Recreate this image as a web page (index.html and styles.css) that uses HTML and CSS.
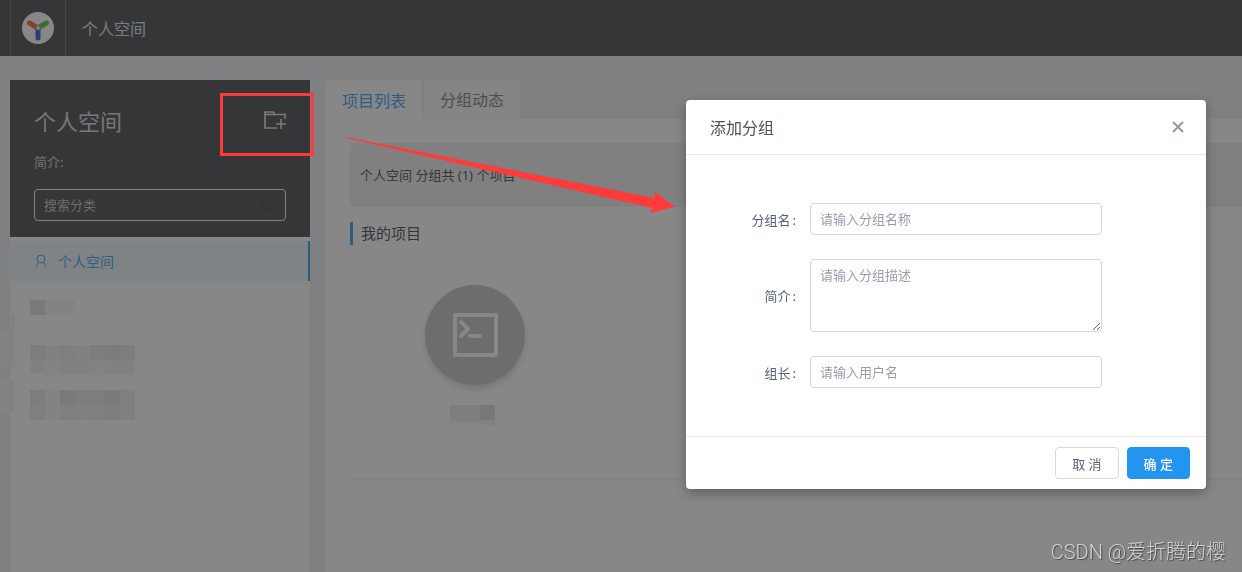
FILE: index.html
```html
<!DOCTYPE html>
<html lang="zh-CN">
<head>
  <meta charset="UTF-8">
  <meta name="viewport" content="width=device-width, initial-scale=1.0">
  <title>个人空间</title>
  <link rel="stylesheet" href="styles.css">
</head>
<body>

  <header class="header">
    <a class="logo" href="#" aria-label="YApi">
      <svg width="32" height="32" viewBox="0 0 32 32">
        <circle cx="16" cy="16" r="16" fill="#fff"/>
        <g stroke-width="5" stroke-linecap="round">
          <path d="M16 16L7.5 11" stroke="#f0561f"/>
          <path d="M16 16L24.5 11" stroke="#4cb81c"/>
          <path d="M16 17V26" stroke="#2346d8"/>
        </g>
        <circle cx="16" cy="16" r="2" fill="#fff" stroke="#c99" stroke-width="1"/>
      </svg>
    </a>
    <span class="breadcrumb">个人空间</span>
  </header>

  <div class="layout">
    <aside class="sidebar">
      <div class="group-bar">
        <div class="group-head">
          <h3>个人空间</h3>
          <button class="add-group" type="button" aria-label="添加分组">
            <svg width="22" height="20" viewBox="0 0 22 20" fill="none" stroke="currentColor" stroke-width="1.6">
              <path d="M13 18H1V2H9L11 4.5H21V9"/>
              <path d="M1 4.5H11"/>
              <path d="M17 9V19M12 14H22"/>
            </svg>
          </button>
        </div>
        <p class="group-desc">简介:</p>
        <div class="search">
          <input type="text" placeholder="搜索分类" aria-label="搜索分类">
          <svg width="13" height="13" viewBox="0 0 13 13" fill="none" stroke="currentColor">
            <circle cx="6" cy="6" r="5"/>
            <path d="M9 9L12 12"/>
          </svg>
        </div>
      </div>
      <nav class="menu">
        <a class="menu-item active" href="#">
          <svg width="12" height="14" viewBox="0 0 12 14" fill="none" stroke="currentColor">
            <circle cx="6" cy="5" r="4"/>
            <path d="M4 8.5C2 9.5 1.5 11 1.5 13M8 8.5C10 9.5 10.5 11 10.5 13"/>
          </svg>
          个人空间
        </a>
        <svg class="masked" width="105" height="120" viewBox="0 0 105 120">
          <path fill="#dddddf" d="M0 0h15v15H0z"/>
          <path fill="#f3f4f3" d="M15 0h30v15H15z"/>
          <path fill="#e7e7e7" d="M0 45h15v15H0zM60 45h15v15H60zM90 45h15v15H90z"/>
          <path fill="#efefef" d="M15 45h15v15H15zM45 45h15v15H45zM0 60h15v13H0zM30 60h30v15H30zM75 60h30v15H75z"/>
          <path fill="#e8eaec" d="M30 45h15v15H30z"/>
          <path fill="#dce3e3" d="M75 45h15v15H75z"/>
          <path fill="#f4f4f4" d="M15 60h15v15H15zM60 60h15v15H60z"/>
          <path fill="#e7e7e7" d="M0 90h15v15H0z"/>
          <path fill="#f4f4f4" d="M15 90h15v30H15z"/>
          <path fill="#dfdfe2" d="M30 90h15v15H30zM75 90h15v15H75z"/>
          <path fill="#e5e7e9" d="M45 90h30v15H45zM75 105h15v15H75z"/>
          <path fill="#ebeeec" d="M90 90h15v30H90zM45 105h15v15H45z"/>
          <path fill="#ececec" d="M0 105h15v15H0zM30 105h15v15H30zM60 105h15v15H60z"/>
        </svg>
      </nav>
    </aside>

    <main class="content">
      <div class="tabs">
        <button class="tab active" type="button">项目列表</button>
        <button class="tab" type="button">分组动态</button>
      </div>
      <div class="panel">
        <div class="summary">个人空间 分组共 (1) 个项目</div>
        <h4 class="section-title">我的项目</h4>
        <div class="projects">
          <a class="project" href="#" aria-label="项目">
            <span class="project-icon">
              <svg width="46" height="46" viewBox="0 0 46 46" fill="none" stroke="currentColor" stroke-width="4" stroke-linejoin="round" stroke-linecap="round">
                <rect x="3" y="3" width="41" height="40"/>
                <path d="M9 10L16 17L9 24M18 24H28"/>
              </svg>
            </span>
            <svg class="project-name" width="50" height="21" viewBox="0 0 50 21">
              <path fill="#e6e8e8" d="M0 0h30v15H0z"/>
              <path fill="#d5d7da" d="M30 0h15v15H30z"/>
              <path fill="#f0f0f0" d="M0 15h45v6L30 18H0z"/>
            </svg>
          </a>
        </div>
      </div>
    </main>
  </div>

  <svg class="edge-patch" width="15" height="100" viewBox="0 0 15 100">
    <path fill="#f1f3f6" d="M0 20L9 19V8Q11 2 15 0V55H7L0 52zM0 68H15V100H0z"/>
  </svg>

  <div class="mask">
    <form class="modal" role="dialog" aria-labelledby="modalTitle">
      <div class="modal-header">
        <h2 id="modalTitle">添加分组</h2>
        <button class="close" type="button" aria-label="关闭">
          <svg width="12" height="12" viewBox="0 0 12 12" fill="none" stroke="currentColor" stroke-width="2">
            <path d="M1 1L11 11M11 1L1 11"/>
          </svg>
        </button>
      </div>
      <div class="modal-body">
        <label for="groupName">分组名<i>:</i></label>
        <input id="groupName" type="text" placeholder="请输入分组名称">
        <label for="groupDesc">简介<i>:</i></label>
        <textarea id="groupDesc" placeholder="请输入分组描述"></textarea>
        <label for="owner">组长<i>:</i></label>
        <input id="owner" type="text" placeholder="请输入用户名">
      </div>
      <div class="modal-footer">
        <button class="btn" type="button">取 消</button>
        <button class="btn primary" type="submit">确 定</button>
      </div>
    </form>
  </div>

  <div class="highlight"></div>
  <svg class="arrow" width="330" height="78" viewBox="0 0 330 78">
    <path fill="#ff3a3a" d="M0 0L308 61L309 55L329 70L304 76L306 71L0 1z"/>
  </svg>
  <div class="watermark">CSDN @爱折腾的樱</div>

</body>
</html>
```
FILE: styles.css
```css
* {
  margin: 0;
  padding: 0;
  box-sizing: border-box;
}

body {
  display: flex;
  flex-direction: column;
  height: 100vh;
  overflow: hidden;
  background: #eceef1;
  color: #32363a;
  font-family: "Noto Sans", "Noto Sans CJK SC", sans-serif;
  font-size: 13px;
}

h2, h3, h4 {
  font-weight: 400;
}

a {
  color: inherit;
  text-decoration: none;
}

button, input, textarea {
  font: inherit;
}

button {
  border: none;
  background: none;
}

svg {
  display: block;
  flex: none;
}

.header {
  display: flex;
  align-items: center;
  flex: none;
  height: 56px;
  padding-left: 10px;
  background: #32363a;
  color: #fff;
}

.logo {
  display: flex;
  align-items: center;
  height: 100%;
  padding: 0 11px;
  border-left: 1px solid #575d63;
  border-right: 1px solid #575d63;
}

.breadcrumb {
  padding-left: 16px;
  font-size: 16px;
  color: #e4e4e4;
}

.layout {
  display: flex;
  flex: 1;
  gap: 16px;
  padding: 24px 0 0 10px;
}

.sidebar {
  flex: none;
  width: 300px;
  background: #fff;
}

.group-bar {
  padding: 24px 24px 16px;
  background: #32363a;
  color: #fff;
}

.group-head {
  display: flex;
  align-items: center;
  justify-content: space-between;
  height: 32px;
}

.group-head h3 {
  font-size: 22px;
  color: #d8d8d8;
}

.add-group {
  color: #e0e0e0;
}

.group-desc {
  padding: 16px 0;
  line-height: 21px;
  color: #ccc;
}

.search {
  display: flex;
  align-items: center;
  height: 32px;
  padding: 0 11px 0 9px;
  border: 1px solid #f0f0f0;
  border-radius: 4px;
  color: #22262a;
}

.search input {
  flex: 1;
  min-width: 0;
  border: none;
  outline: none;
  background: transparent;
}

.search input::placeholder {
  color: #bbb;
}

.menu {
  padding-top: 4px;
}

.menu-item {
  display: flex;
  align-items: center;
  gap: 11px;
  height: 40px;
  padding-left: 25px;
  font-size: 14px;
}

.menu-item.active {
  border-right: 2px solid #2395f1;
  background: #ecf6fc;
  color: #2395f1;
}

.masked {
  margin: 19px 20px;
}

.content {
  display: flex;
  flex: 1;
  flex-direction: column;
  min-width: 0;
}

.tabs {
  display: flex;
  gap: 2px;
  height: 39px;
}

.tab {
  height: 38px;
  padding: 0 16px;
  border-radius: 4px 4px 0 0;
  background: #f9f9f9;
  color: #6b6f78;
  font-size: 16px;
}

.tab.active {
  height: 39px;
  background: #fff;
  color: #2395f1;
}

.panel {
  flex: 1;
  padding: 24px 0 0 24px;
  background: #fff;
}

.summary {
  height: 64px;
  padding-left: 10px;
  border-radius: 4px 0 0 4px;
  background: #eee;
  line-height: 64px;
}

.section-title {
  margin: 15px 0 24px;
  padding-left: 8px;
  border-left: 3px solid #2395f1;
  font-size: 15px;
  line-height: 23px;
}

.projects {
  display: flex;
  height: 211px;
  padding-top: 16px;
  border-bottom: 1px solid #f0f0f0;
}

.project {
  display: flex;
  flex-direction: column;
  align-items: center;
  gap: 20px;
  width: 250px;
}

.project-icon {
  display: grid;
  place-items: center;
  width: 100px;
  height: 100px;
  border-radius: 50%;
  background: #bfbfbf;
  box-shadow: 0 4px 6px rgba(0, 0, 0, 0.16);
  color: #fff;
}

.edge-patch {
  position: absolute;
  left: 0;
  top: 312px;
}

.mask {
  position: fixed;
  inset: 0;
  display: flex;
  justify-content: flex-end;
  align-items: flex-start;
  padding: 100px 36px 0 0;
  background: rgba(55, 55, 55, 0.6);
}

.modal {
  width: 520px;
  border-radius: 4px;
  background: #fff;
  box-shadow: 0 4px 12px rgba(0, 0, 0, 0.3);
}

.modal-header {
  display: flex;
  align-items: center;
  justify-content: space-between;
  height: 55px;
  padding: 0 22px 0 24px;
  border-bottom: 1px solid #e9e9e9;
}

.modal-header h2 {
  font-size: 16px;
  color: #4a5560;
}

.close {
  color: #9297a6;
}

.modal-body {
  display: grid;
  grid-template-columns: 88px 1fr;
  align-items: center;
  gap: 24px 14px;
  padding: 48px 104px 48px 22px;
}

.modal-body label {
  color: #59627a;
  text-align: right;
}

.modal-body label i {
  padding-left: 2px;
  font-style: normal;
}

.modal-body input,
.modal-body textarea {
  width: 100%;
  padding: 0 9px;
  border: 1px solid #d9d9d9;
  border-radius: 4px;
  outline: none;
}

.modal-body input {
  height: 32px;
}

.modal-body textarea {
  display: block;
  height: 73px;
  padding: 5px 9px;
  line-height: 21px;
}

.modal-body input::placeholder,
.modal-body textarea::placeholder {
  color: #999eae;
}

.modal-footer {
  display: flex;
  justify-content: flex-end;
  gap: 8px;
  padding: 10px 16px;
  border-top: 1px solid #e9e9e9;
}

.btn {
  height: 32px;
  padding: 0 16px;
  border: 1px solid #d9d9d9;
  border-radius: 4px;
  color: #59627a;
}

.btn.primary {
  border-color: #2395f1;
  background: #2395f1;
  color: #fff;
  font-weight: 500;
}

.highlight {
  position: absolute;
  left: 220px;
  top: 93px;
  width: 94px;
  height: 63px;
  border: 3px solid #ff3a3a;
}

.arrow {
  position: absolute;
  left: 346px;
  top: 137px;
}

.watermark {
  position: fixed;
  right: 16px;
  bottom: 5px;
  color: #d4d4d4;
  font-family: Roboto, "Noto Sans CJK SC", sans-serif;
  font-size: 20px;
  font-weight: 300;
  line-height: 30px;
  text-shadow: 1px 1px 1px #444;
}
```
